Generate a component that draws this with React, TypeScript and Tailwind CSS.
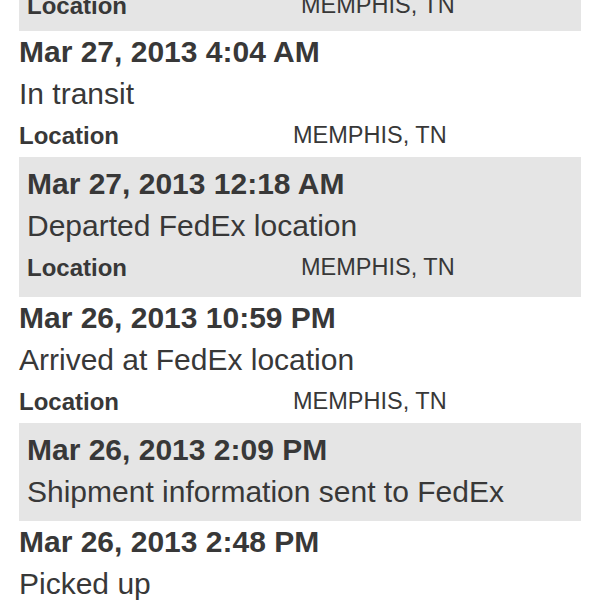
const events = [
  { date: 'Mar 27, 2013 4:04 AM', status: 'In transit', location: 'MEMPHIS, TN' },
  { date: 'Mar 27, 2013 12:18 AM', status: 'Departed FedEx location', location: 'MEMPHIS, TN' },
  { date: 'Mar 26, 2013 10:59 PM', status: 'Arrived at FedEx location', location: 'MEMPHIS, TN' },
  { date: 'Mar 26, 2013 2:09 PM', status: 'Shipment information sent to FedEx' },
  { date: 'Mar 26, 2013 2:48 PM', status: 'Picked up' },
];

function LocationLine({ value }: { value: string }) {
  return (
    <div className="flex items-center h-[42px]">
      <span className="w-[274px] shrink-0 text-[24px] font-bold">Location</span>
      <span className="text-[23.5px]">{value}</span>
    </div>
  );
}

export default function App() {
  return (
    <div
      className="w-[600px] h-[600px] overflow-hidden bg-white text-[#383838]"
      style={{ fontFamily: '"Liberation Sans", Arial, sans-serif' }}
    >
      <div className="mx-[19px] -mt-[15px]">
        {/* tail of the previous (scrolled) event */}
        <div className="bg-[#e5e5e5] px-[8px] pb-[4px]">
          <LocationLine value="MEMPHIS, TN" />
        </div>

        {events.map((ev, i) => {
          const shaded = i % 2 === 1;
          return (
            <div key={i} className={shaded ? 'bg-[#e5e5e5] px-[8px] pt-[6px] pb-[8px]' : ''}>
              <div className="flex items-center h-[42px] text-[30px] font-bold leading-none">{ev.date}</div>
              <div className="flex items-center h-[42px] text-[30px] leading-none">{ev.status}</div>
              {ev.location && <LocationLine value={ev.location} />}
            </div>
          );
        })}
      </div>
    </div>
  );
}
